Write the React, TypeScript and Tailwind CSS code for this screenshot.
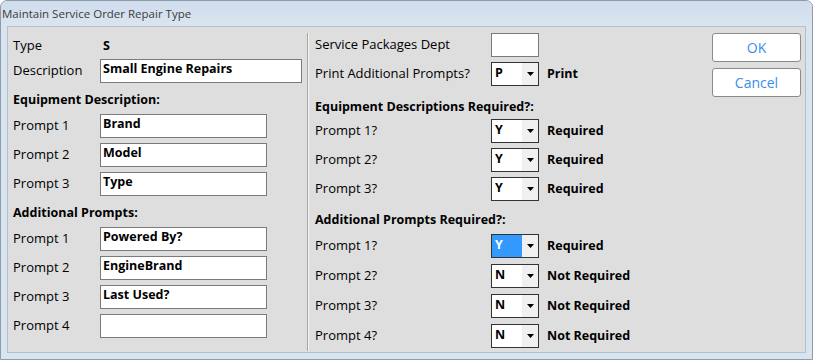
import React from "react";

const font = { fontFamily: '"Open Sans", "Noto Sans", sans-serif' };

function TextBox({ value, w }: { value?: string; w: string }) {
  return (
    <div className={`${w} h-[24px] bg-white border border-[#7a7a7a] pl-[2px] flex items-center text-[12.5px] font-bold text-black leading-none pb-[3px]`}>
      {value}
    </div>
  );
}

function Select({ value, selected }: { value: string; selected?: boolean }) {
  return (
    <div className="w-[48px] h-[24px] border border-[#333] flex bg-white">
      <div
        className={`flex-1 flex items-center pl-[3px] text-[12.5px] font-bold leading-none pb-[2px] ${
          selected ? "bg-[#3399ff] text-white" : "text-black"
        }`}
      >
        {value}
      </div>
      <div className="w-[16px] bg-[#f0f0f0] flex items-center justify-center">
        <svg width="7" height="4" viewBox="0 0 7 4">
          <polygon points="0,0 7,0 3.5,4" fill="#000" />
        </svg>
      </div>
    </div>
  );
}

function LeftRow({ label, value }: { label: string; value?: string }) {
  return (
    <div className="flex items-center h-[24px]">
      <div className="w-[87px] text-[13px] text-black">{label}</div>
      <TextBox value={value} w="w-[167px]" />
    </div>
  );
}

function RightRow({
  label,
  value,
  desc,
  selected,
}: {
  label: string;
  value: string;
  desc: string;
  selected?: boolean;
}) {
  return (
    <div className="flex items-center h-[24px]">
      <div className="w-[176px] text-[13px] text-black">{label}</div>
      <Select value={value} selected={selected} />
      <div className="ml-[8px] text-[12.5px] font-bold text-black">{desc}</div>
    </div>
  );
}

export default function App() {
  return (
    <div
      style={font}
      className="w-[813px] h-[360px] bg-[#d9e4f1] border border-[#8f9bab] rounded-t-[7px] flex flex-col px-[6px] pb-[6px] overflow-hidden"
    >
      <div className="h-[25px] flex items-center pl-[1px] text-[11.5px] text-[#3b3b3b] bg-gradient-to-b from-[#cfdcec] to-[#dbe5f1] -mx-[6px] px-[7px]">
        Maintain Service Order Repair Type
      </div>
      <div className="flex-1 bg-[#dedede] border border-[#b4bfcc] flex pl-[5px] pt-[6px]">
        {/* Left column */}
        <div className="w-[289px] flex flex-col">
          <div className="flex items-center h-[24px] pt-[2px]">
            <div className="w-[90px] text-[13px] text-black">Type</div>
            <div className="text-[12.5px] font-bold text-black">S</div>
          </div>
          <div className="flex items-center h-[24px] mt-[2px]">
            <div className="w-[87px] text-[13px] text-black">Description</div>
            <TextBox value="Small Engine Repairs" w="w-[202px]" />
          </div>
          <div className="h-[31px] flex items-center pt-[4px] text-[12.5px] font-bold text-black">
            Equipment Description:
          </div>
          <div className="flex flex-col gap-[5px]">
            <LeftRow label="Prompt 1" value="Brand" />
            <LeftRow label="Prompt 2" value="Model" />
            <LeftRow label="Prompt 3" value="Type" />
          </div>
          <div className="h-[31px] flex items-center pt-[4px] text-[12.5px] font-bold text-black">
            Additional Prompts:
          </div>
          <div className="flex flex-col gap-[5px]">
            <LeftRow label="Prompt 1" value="Powered By?" />
            <LeftRow label="Prompt 2" value="EngineBrand" />
            <LeftRow label="Prompt 3" value="Last Used?" />
            <LeftRow label="Prompt 4" />
          </div>
        </div>
        {/* Divider */}
        <div className="ml-[5px] mb-[1px] w-[2px] border-l border-[#a6a6a6] border-r border-r-[#f4f4f4]" />
        {/* Right column */}
        <div className="ml-[6px] flex-1 flex flex-col">
          <div className="flex items-center h-[24px]">
            <div className="w-[176px] text-[13px] text-black">Service Packages Dept</div>
            <div className="w-[48px] h-[24px] bg-white border border-[#7a7a7a]" />
          </div>
          <div className="mt-[5px]">
            <RightRow label="Print Additional Prompts?" value="P" desc="Print" />
          </div>
          <div className="h-[33px] flex items-center pt-[9px] text-[12.5px] font-bold text-black">
            Equipment Descriptions Required?:
          </div>
          <div className="flex flex-col gap-[5px]">
            <RightRow label="Prompt 1?" value="Y" desc="Required" />
            <RightRow label="Prompt 2?" value="Y" desc="Required" />
            <RightRow label="Prompt 3?" value="Y" desc="Required" />
          </div>
          <div className="h-[33px] flex items-center pt-[5px] text-[12.5px] font-bold text-black">
            Additional Prompts Required?:
          </div>
          <div className="flex flex-col gap-[6px]">
            <RightRow label="Prompt 1?" value="Y" desc="Required" selected />
            <RightRow label="Prompt 2?" value="N" desc="Not Required" />
            <RightRow label="Prompt 3?" value="N" desc="Not Required" />
            <RightRow label="Prompt 4?" value="N" desc="Not Required" />
          </div>
        </div>
        {/* Buttons */}
        <div className="flex flex-col gap-[6px] pr-[4px]">
          <button className="w-[89px] h-[29px] bg-white border border-[#8a8a8a] rounded-[3px] text-[14px] text-[#3b8ee8]">
            OK
          </button>
          <button className="w-[89px] h-[29px] bg-white border border-[#8a8a8a] rounded-[3px] text-[14px] text-[#3b8ee8]">
            Cancel
          </button>
        </div>
      </div>
    </div>
  );
}
